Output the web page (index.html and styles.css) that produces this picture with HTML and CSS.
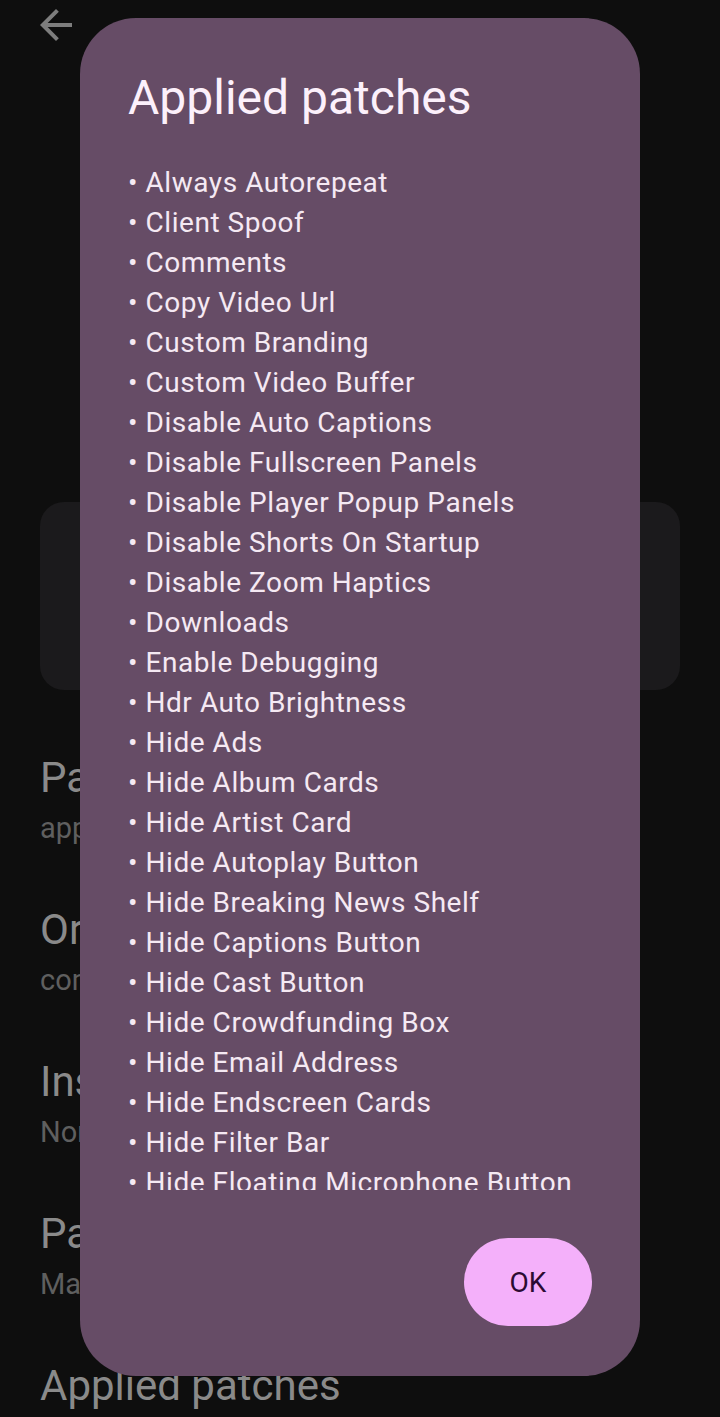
FILE: index.html
```html
<!DOCTYPE html>
<html lang="en">
<head>
<meta charset="utf-8">
<title>Applied patches</title>
<link rel="stylesheet" href="styles.css">
</head>
<body>
<div class="page">
  <header class="topbar">
    <svg class="back" viewBox="0 0 24 24" width="48" height="48" aria-hidden="true">
      <path d="M20 11H7.83l5.59-5.59L12 4l-8 8 8 8 1.41-1.41L7.83 13H20v-2z"/>
    </svg>
  </header>
  <div class="spacer"></div>
  <div class="card"></div>
  <ul class="info">
    <li class="info-item"><div class="info-title">Package name</div><div class="info-sub">app.revanced.android.youtube</div></li>
    <li class="info-item"><div class="info-title">Original package name</div><div class="info-sub">com.google.android.youtube</div></li>
    <li class="info-item"><div class="info-title">Install type</div><div class="info-sub">Non-root</div></li>
    <li class="info-item"><div class="info-title">Patched date</div><div class="info-sub">Mar 12, 2024</div></li>
    <li class="info-item"><div class="info-title">Applied patches</div><div class="info-sub">42 patches</div></li>
  </ul>
</div>

<div class="dialog" role="dialog" aria-labelledby="dlg-title">
  <h2 class="dialog-title" id="dlg-title">Applied patches</h2>
  <div class="dialog-content">
    <div class="patch">• Always Autorepeat</div>
    <div class="patch">• Client Spoof</div>
    <div class="patch">• Comments</div>
    <div class="patch">• Copy Video Url</div>
    <div class="patch">• Custom Branding</div>
    <div class="patch">• Custom Video Buffer</div>
    <div class="patch">• Disable Auto Captions</div>
    <div class="patch">• Disable Fullscreen Panels</div>
    <div class="patch">• Disable Player Popup Panels</div>
    <div class="patch">• Disable Shorts On Startup</div>
    <div class="patch">• Disable Zoom Haptics</div>
    <div class="patch">• Downloads</div>
    <div class="patch">• Enable Debugging</div>
    <div class="patch">• Hdr Auto Brightness</div>
    <div class="patch">• Hide Ads</div>
    <div class="patch">• Hide Album Cards</div>
    <div class="patch">• Hide Artist Card</div>
    <div class="patch">• Hide Autoplay Button</div>
    <div class="patch">• Hide Breaking News Shelf</div>
    <div class="patch">• Hide Captions Button</div>
    <div class="patch">• Hide Cast Button</div>
    <div class="patch">• Hide Crowdfunding Box</div>
    <div class="patch">• Hide Email Address</div>
    <div class="patch">• Hide Endscreen Cards</div>
    <div class="patch">• Hide Filter Bar</div>
    <div class="patch">• Hide Floating Microphone Button</div>
    <div class="patch">• Hide Get Premium</div>
    <div class="patch">• Hide Info Cards</div>
  </div>
  <div class="dialog-actions">
    <button class="btn-ok" type="button">OK</button>
  </div>
</div>
</body>
</html>
```

FILE: styles.css
```css
* { box-sizing: border-box; }

html, body {
  margin: 0;
  padding: 0;
  background: #0e0e0e;
  font-family: Roboto, "Noto Sans", "Liberation Sans", sans-serif;
}

body {
  width: 720px;
  height: 1417px;
  overflow: hidden;
}

.page {
  padding: 0 40px;
}

.topbar {
  height: 50px;
  display: flex;
  align-items: flex-start;
  padding-top: 1px;
}

.back {
  margin-left: -8px;
  fill: #7d7d7d;
}

.spacer {
  height: 452px;
}

.card {
  height: 188px;
  border-radius: 24px;
  background: #1b1a1c;
}

.info {
  list-style: none;
  margin: 34px 0 0 0;
  padding: 0;
}

.info-item {
  height: 152px;
  padding-top: 26px;
  white-space: nowrap;
}

.info-title {
  font-size: 42px;
  line-height: 56px;
  color: #8a8a8a;
}

.info-sub {
  font-size: 29px;
  line-height: 44px;
  color: #5f5f5f;
}

.dialog {
  position: fixed;
  left: 80px;
  top: 18px;
  width: 560px;
  background: #664c66;
  border-radius: 56px;
  padding: 48px 48px 50px 48px;
  display: flex;
  flex-direction: column;
}

.dialog-title {
  margin: 0;
  font-size: 48px;
  font-weight: 400;
  line-height: 64px;
  color: #fcf0fb;
}

.dialog-content {
  margin-top: 33px;
  height: 1027px;
  overflow: hidden;
}

.patch {
  font-size: 28px;
  line-height: 40px;
  color: #f5e9f3;
  white-space: nowrap;
  letter-spacing: 0.55px;
}

.dialog-actions {
  margin-top: 48px;
  display: flex;
  justify-content: flex-end;
}

.btn-ok {
  width: 128px;
  height: 88px;
  border: none;
  border-radius: 44px;
  background: #f4b0fa;
  color: #2c0b32;
  font-family: Roboto, "Noto Sans", "Liberation Sans", sans-serif;
  font-size: 28px;
  font-weight: 400;
  letter-spacing: 0.2px;
  padding: 0;
}
```
